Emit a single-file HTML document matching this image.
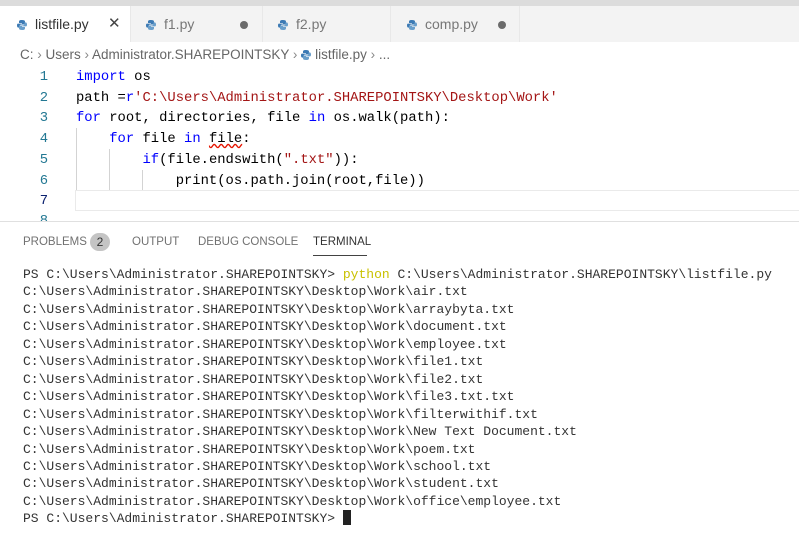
<!DOCTYPE html>
<html><head><meta charset="utf-8"><style>
*{margin:0;padding:0;box-sizing:border-box}
body{width:799px;height:538px;overflow:hidden;background:#fff;position:relative;font-family:"Liberation Sans",sans-serif}
.top{position:absolute;left:0;top:0;width:799px;height:6px;background:#dcdcdc}
.bar{position:absolute;left:0;top:6px;width:799px;height:36px;background:#f3f3f3}
.tab{position:absolute;top:6px;height:36px;font-size:14px;color:#777;line-height:36px;border-right:1px solid #e8e8e8}
.tab.act{background:#fff;color:#333}
.py{display:inline-block;width:10px;height:10px;vertical-align:-1px;margin-right:8px}
.dot{position:absolute;top:15px;width:8px;height:8px;border-radius:50%;background:#6b6b6b}
.crumb{position:absolute;left:20px;top:47px;font-size:13.5px;color:#666;white-space:pre}
.code{position:absolute;font-family:"Liberation Mono",monospace;font-size:13.85px;white-space:pre;color:#000}
.ln{position:absolute;left:0;width:48px;text-align:right;font-family:"Liberation Mono",monospace;font-size:13.85px;color:#237893}
.k{color:#0000ff}.s{color:#a31515}.kw{color:#0000ff}
.guide{position:absolute;width:1px;background:#d3d3d3}
.term{position:absolute;left:23px;top:266px;font-family:"Liberation Mono",monospace;font-size:13.0px;line-height:17.45px;white-space:pre;color:#333}
.pt{position:absolute;top:236px;font-size:11.5px;color:#717171}
</style></head><body>
<div class="top"></div><div class="bar"></div>
<svg width="0" height="0" style="position:absolute"><defs><symbol id="p" viewBox="0 0 10 10"><path d="M5 0C2 0 2 1 2 2v1h3v.6H1C0 3.6 0 5 0 5.5 0 7 .6 7.6 1.5 7.6H2.5V6.3c0-1 .8-1.8 1.8-1.8h2.5c.8 0 1.2-.5 1.2-1.2V1.5C8 .5 7 0 5 0z" fill="#3c7ab4"/><path d="M5 10c3 0 3-1 3-2V7H5v-.6h4c1 0 1-1.4 1-1.9C10 3 9.4 2.4 8.5 2.4H7.5v1.3c0 1-.8 1.8-1.8 1.8H3.2C2.4 5.5 2 6 2 6.7v1.8C2 9.5 3 10 5 10z" fill="#6a9fcb"/></symbol></defs></svg>
<div class="tab act" style="left:0;width:131px;padding-left:17px"><svg class="py"><use href="#p"/></svg>listfile.py<span style="position:absolute;left:108px;color:#444;font-size:15px">✕</span></div>
<div class="tab" style="left:131px;width:132px;padding-left:15px"><svg class="py"><use href="#p"/></svg>f1.py<span class="dot" style="left:109px"></span></div>
<div class="tab" style="left:263px;width:128px;padding-left:15px"><svg class="py"><use href="#p"/></svg>f2.py</div>
<div class="tab" style="left:391px;width:129px;padding-left:16px"><svg class="py"><use href="#p"/></svg>comp.py<span class="dot" style="left:107px"></span></div>
<div class="crumb">C: <span style="color:#888">›</span> Users <span style="color:#888">›</span> Administrator.SHAREPOINTSKY <span style="color:#888">›</span> <svg class="py" style="margin-right:4px"><use href="#p"/></svg>listfile.py <span style="color:#888">›</span> ...</div>
<div style="position:absolute;left:75px;top:190px;width:724px;height:21px;border:1px solid #eaeaea;border-right:none"></div>
<div class="guide" style="left:76px;top:128px;height:62px"></div>
<div class="guide" style="left:109px;top:149px;height:41px"></div>
<div class="guide" style="left:142px;top:170px;height:20px"></div>
<div class="ln" style="top:69px">1</div><div class="code" style="left:76px;top:69px"><span class="kw">import</span> os</div>
<div class="ln" style="top:90px">2</div><div class="code" style="left:76px;top:90px">path =<span class="k">r</span><span class="s">'C:\Users\Administrator.SHAREPOINTSKY\Desktop\Work'</span></div>
<div class="ln" style="top:110px">3</div><div class="code" style="left:76px;top:110px"><span class="kw">for</span> root, directories, file <span class="k">in</span> os.walk(path):</div>
<div class="ln" style="top:131px">4</div><div class="code" style="left:76px;top:131px">    <span class="kw">for</span> file <span class="k">in</span> <span style="text-decoration:underline wavy #e51400">file</span>:</div>
<div class="ln" style="top:152px">5</div><div class="code" style="left:76px;top:152px">        <span class="kw">if</span>(file.endswith(<span class="s">".txt"</span>)):</div>
<div class="ln" style="top:173px">6</div><div class="code" style="left:76px;top:173px">            print(os.path.join(root,file))</div>
<div class="ln" style="top:193px;color:#0b216f">7</div>
<div class="ln" style="top:213px;height:8px;overflow:hidden">8</div>
<div style="position:absolute;left:0;top:221px;width:799px;height:317px;background:#fff;border-top:1px solid #e0e0e0"></div>
<div class="pt" style="left:23px">PROBLEMS</div>
<div style="position:absolute;left:90px;top:233px;width:20px;height:18px;border-radius:9px;background:#c4c4c4;color:#333;font-size:12px;text-align:center;line-height:18px">2</div>
<div class="pt" style="left:132px">OUTPUT</div>
<div class="pt" style="left:198px">DEBUG CONSOLE</div>
<div class="pt" style="left:313px;color:#333">TERMINAL</div>
<div style="position:absolute;left:313px;top:255px;width:54px;height:1px;background:#424242"></div>
<div class="term">PS C:\Users\Administrator.SHAREPOINTSKY&gt; <span style="color:#c9c100">python</span> C:\Users\Administrator.SHAREPOINTSKY\listfile.py
C:\Users\Administrator.SHAREPOINTSKY\Desktop\Work\air.txt
C:\Users\Administrator.SHAREPOINTSKY\Desktop\Work\arraybyta.txt
C:\Users\Administrator.SHAREPOINTSKY\Desktop\Work\document.txt
C:\Users\Administrator.SHAREPOINTSKY\Desktop\Work\employee.txt
C:\Users\Administrator.SHAREPOINTSKY\Desktop\Work\file1.txt
C:\Users\Administrator.SHAREPOINTSKY\Desktop\Work\file2.txt
C:\Users\Administrator.SHAREPOINTSKY\Desktop\Work\file3.txt.txt
C:\Users\Administrator.SHAREPOINTSKY\Desktop\Work\filterwithif.txt
C:\Users\Administrator.SHAREPOINTSKY\Desktop\Work\New Text Document.txt
C:\Users\Administrator.SHAREPOINTSKY\Desktop\Work\poem.txt
C:\Users\Administrator.SHAREPOINTSKY\Desktop\Work\school.txt
C:\Users\Administrator.SHAREPOINTSKY\Desktop\Work\student.txt
C:\Users\Administrator.SHAREPOINTSKY\Desktop\Work\office\employee.txt
PS C:\Users\Administrator.SHAREPOINTSKY&gt; <span style="display:inline-block;width:8px;height:15px;background:#222;vertical-align:-3px"></span></div>
</body></html>
